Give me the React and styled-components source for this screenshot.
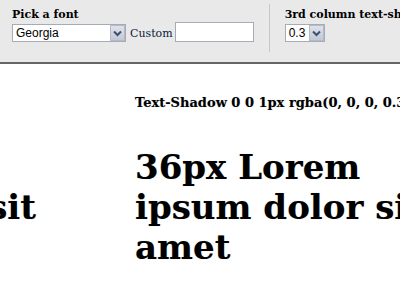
import React from 'react'
import styled, { createGlobalStyle } from 'styled-components'

const Global = createGlobalStyle`
    html, body {
        margin: 0;
        padding: 0;
        background: #fff;
        overflow: hidden;
    }
    body {
        font-family: "DejaVu Serif", Georgia, serif;
        color: #000;
    }
`

const columns = [
    { label: 'Text-Shadow none', title: '36px Lorem ipsum dolor sit amet' },
    { label: 'Text-Shadow 0 0 1px rgba(0, 0, 0, 0.3)', title: '36px Lorem ipsum dolor sit amet' },
]

function Chevron() {
    return (
        <svg width="9" height="7" viewBox="0 0 9 7">
            <path d="M1 1.5 L4.5 5 L8 1.5" fill="none" stroke="#3d4f70" strokeWidth="2" />
        </svg>
    )
}

function Dropdown({ value, width }) {
    return (
        <SelectBox width={width}>
            <SelectText>{value}</SelectText>
            <ArrowButton><Chevron /></ArrowButton>
        </SelectBox>
    )
}

function App() {
    return (
        <>
            <Global />
            <Header>
                <Group>
                    <Label>Pick a font</Label>
                    <Controls>
                        <Dropdown value="Georgia" width={114} />
                        <CustomLabel>Custom</CustomLabel>
                        <TextInput type="text" />
                    </Controls>
                </Group>
                <Group last>
                    <Label>3rd column text-shadow opacity</Label>
                    <Controls>
                        <Dropdown value="0.3" width={40} />
                    </Controls>
                </Group>
            </Header>
            <Main>
                <Columns>
                    {columns.map((col, index) => (
                        <Column key={index}>
                            <ColumnLabel>{col.label}</ColumnLabel>
                            <Sample>{col.title}</Sample>
                        </Column>
                    ))}
                </Columns>
            </Main>
        </>
    )
}

export default App

const Header = styled.div`
    display: flex;
    align-items: flex-start;
    height: 58px;
    padding: 4px 0 0 12px;
    background: #e9e9e9;
    border-bottom: 2px solid #666;
    overflow: hidden;
    white-space: nowrap;
`
const Group = styled.div`
    display: flex;
    flex-direction: column;
    height: 44px;
    padding-top: 4px;
    padding-right: ${props => props.last ? '0' : '15px'};
    margin-right: ${props => props.last ? '0' : '15px'};
    border-right: ${props => props.last ? 'none' : '1px solid #c8c8c8'};
`
const Label = styled.div`
    font-family: "DejaVu Serif", serif;
    font-weight: 700;
    font-size: 11px;
    line-height: 13px;
    height: 13px;
`
const Controls = styled.div`
    display: flex;
    align-items: center;
    margin-top: 1px;
`
const SelectBox = styled.div`
    display: flex;
    align-items: center;
    box-sizing: border-box;
    width: ${props => props.width}px;
    height: 18px;
    margin-top: 2px;
    background: #fff;
    border: 1px solid #a5acb5;
`
const SelectText = styled.span`
    flex: 1;
    padding-left: 3px;
    font-family: "Liberation Sans", Arial, sans-serif;
    font-size: 12px;
    color: #000;
`
const ArrowButton = styled.div`
    display: flex;
    align-items: center;
    justify-content: center;
    box-sizing: border-box;
    width: 15px;
    height: 16px;
    background: linear-gradient(#dfe2ea, #c3c8d6);
    border: 1px solid #b4bac8;
`
const CustomLabel = styled.span`
    margin: 2px 2px 0 4px;
    font-family: "DejaVu Serif", serif;
    font-size: 11px;
    color: #0a1a3a;
`
const TextInput = styled.input`
    box-sizing: border-box;
    width: 79px;
    height: 20px;
    margin: 0;
    padding: 0 2px;
    background: #fff;
    border: 1px solid #a5acb5;
    outline: none;
`
const Main = styled.div`
    overflow: hidden;
    padding-top: 32px;
`
const Columns = styled.div`
    display: flex;
    margin-left: -252px;
`
const Column = styled.div`
    flex: 0 0 347px;
    margin-right: 40px;
`
const ColumnLabel = styled.div`
    font-family: "DejaVu Serif", serif;
    font-weight: 700;
    font-size: 13px;
    line-height: 14px;
    white-space: nowrap;
    text-shadow: 0 0 1px rgba(0, 0, 0, 0.3);
`
const Sample = styled.div`
    margin-top: 37px;
    font-family: "DejaVu Serif", serif;
    font-weight: 700;
    font-size: 34px;
    line-height: 40px;
    text-shadow: 0 0 1px rgba(0, 0, 0, 0.3);
`
